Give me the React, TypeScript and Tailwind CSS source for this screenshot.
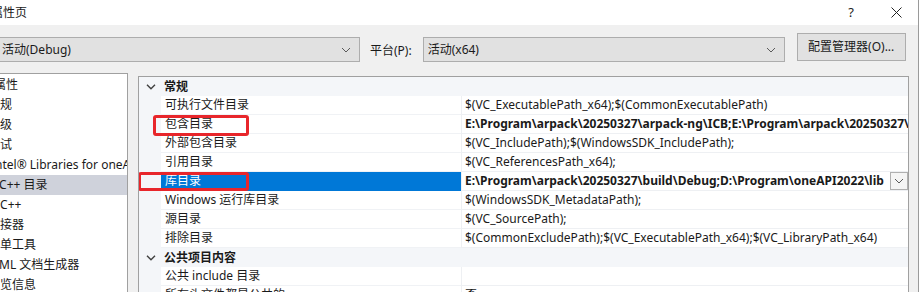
import React from "react";

const FONT = { fontFamily: '"Noto Sans", "Noto Sans CJK SC", sans-serif' };

function Chevron({ className = "" }: { className?: string }) {
  return (
    <svg width="10" height="6" viewBox="0 0 10 6" className={className}>
      <path d="M1 1 L5 5 L9 1" fill="none" stroke="#5a5a5a" strokeWidth="1" />
    </svg>
  );
}

function HeaderChevron() {
  return (
    <svg width="10" height="6" viewBox="0 0 10 6">
      <path d="M1 0.8 L5 4.8 L9 0.8" fill="none" stroke="#404040" strokeWidth="1.4" />
    </svg>
  );
}

type Row =
  | { kind: "cat"; name: string }
  | { kind: "prop"; name: string; value: string; bold?: boolean; selected?: boolean };

const rows: Row[] = [
  { kind: "cat", name: "常规" },
  { kind: "prop", name: "可执行文件目录", value: "$(VC_ExecutablePath_x64);$(CommonExecutablePath)" },
  { kind: "prop", name: "包含目录", value: "E:\\Program\\arpack\\20250327\\arpack-ng\\ICB;E:\\Program\\arpack\\20250327\\arpack-ng\\SRC", bold: true },
  { kind: "prop", name: "外部包含目录", value: "$(VC_IncludePath);$(WindowsSDK_IncludePath);" },
  { kind: "prop", name: "引用目录", value: "$(VC_ReferencesPath_x64);" },
  { kind: "prop", name: "库目录", value: "E:\\Program\\arpack\\20250327\\build\\Debug;D:\\Program\\oneAPI2022\\lib", bold: true, selected: true },
  { kind: "prop", name: "Windows 运行库目录", value: "$(WindowsSDK_MetadataPath);" },
  { kind: "prop", name: "源目录", value: "$(VC_SourcePath);" },
  { kind: "prop", name: "排除目录", value: "$(CommonExcludePath);$(VC_ExecutablePath_x64);$(VC_LibraryPath_x64)" },
  { kind: "cat", name: "公共项目内容" },
  { kind: "prop", name: "公共 include 目录", value: "" },
  { kind: "prop", name: "所有头文件都是公共的", value: "否" },
];

const tree: { text: string; ml: string; selected?: boolean }[] = [
  { text: "配置属性", ml: "ml-[-30px]" },
  { text: "常规", ml: "ml-[-12px]" },
  { text: "高级", ml: "ml-[-12px]" },
  { text: "调试", ml: "ml-[-12px]" },
  { text: "Intel® Libraries for oneAPI", ml: "ml-[-9px]" },
  { text: "VC++ 目录", ml: "ml-[-8px]", selected: true },
  { text: "C/C++", ml: "ml-[-12px]" },
  { text: "链接器", ml: "ml-[-12px]" },
  { text: "清单工具", ml: "ml-[-12px]" },
  { text: "XML 文档生成器", ml: "ml-[-8px]" },
  { text: "浏览信息", ml: "ml-[-12px]" },
];

export default function App() {
  return (
    <div style={FONT} className="w-[923px] h-[292px] overflow-hidden bg-white flex text-[12px] text-[#1a1a1a]">
      <div className="w-[919px] h-full border-r border-[#9a9a9a] flex flex-col">
        {/* Title bar */}
        <div className="h-[25px] bg-white flex items-center shrink-0">
          <span className="ml-[-9px] text-[12px] whitespace-nowrap">属性页</span>
          <div className="flex-1" />
          <span className="text-[13px] mr-[37px] text-[#222]">?</span>
          <svg width="11" height="11" viewBox="0 0 11 11" className="mr-[16px]">
            <path d="M0.5 0.5 L10.5 10.5 M10.5 0.5 L0.5 10.5" stroke="#222" strokeWidth="1" />
          </svg>
        </div>
        {/* Body */}
        <div className="flex-1 bg-[#f0f0f0] flex flex-col">
          <div className="flex items-start pt-[8px] h-[48px] shrink-0">
            <div className="mt-[4px] ml-[-3px] w-[363px] h-[25px] bg-[#e1e1e1] border border-[#adadad] flex items-center pl-[4px] pr-[8px]">
              <span className="flex-1 whitespace-nowrap">活动(Debug)</span>
              <Chevron />
            </div>
            <span className="mt-[9px] ml-[10px] whitespace-nowrap">平台(P):</span>
            <div className="mt-[4px] ml-[11px] w-[362px] h-[25px] bg-[#e1e1e1] border border-[#adadad] flex items-center pl-[4px] pr-[8px]">
              <span className="flex-1 whitespace-nowrap">活动(x64)</span>
              <Chevron />
            </div>
            <div className="ml-[12px] w-[109px] h-[28px] bg-[#e1e1e1] border border-[#adadad] flex items-center justify-center whitespace-nowrap">
              配置管理器(O)...
            </div>
          </div>
          <div className="flex flex-1 items-start">
            {/* Tree */}
            <div className="w-[128px] h-[230px] bg-white border-t border-r border-[#a0a0a0] overflow-hidden pt-[1px] shrink-0">
              {tree.map((t, i) => (
                <div
                  key={i}
                  className={`h-[20px] flex items-center whitespace-nowrap ${t.selected ? "bg-[#cfd2db]" : ""}`}
                >
                  <span className={t.ml}>{t.text}</span>
                </div>
              ))}
            </div>
            {/* Grid */}
            <div className="relative ml-[10px] mt-[3px] w-[771px] h-[230px] bg-white border-t border-l border-r border-[#a0a0a0] overflow-hidden">
              {rows.map((r, i) =>
                r.kind === "cat" ? (
                  <div key={i} className="h-[19px] bg-[#f4f6f9] flex items-center">
                    <div className="w-[22px] flex justify-center pl-[2px]">
                      <HeaderChevron />
                    </div>
                    <span className="font-bold pl-[3px]">{r.name}</span>
                  </div>
                ) : (
                  <div key={i} className="h-[19px] flex bg-[#f4f6f9]">
                    <div className="w-[22px] shrink-0" />
                    <div
                      className={`w-[300px] shrink-0 flex items-center pl-[4px] whitespace-nowrap border-b ${
                        r.selected ? "bg-[#0078d7] text-white border-[#0078d7]" : "bg-white border-[#f0f2f5]"
                      }`}
                    >
                      {r.name}
                    </div>
                    <div className="flex-1 min-w-0 bg-white border-l border-b border-[#eef0f3] flex items-center pl-[3px] overflow-hidden relative">
                      <span className={`whitespace-nowrap ${r.bold ? "font-bold" : ""}`}>{r.value}</span>
                      {r.selected && (
                        <div className="absolute right-0 top-0 w-[18px] h-[18px] bg-[#f5f5f5] border border-[#b0b0b0] flex items-center justify-center">
                          <Chevron />
                        </div>
                      )}
                    </div>
                  </div>
                )
              )}
              {/* Red annotation boxes */}
              <div className="absolute left-[14px] top-[38px] w-[96px] h-[21px] border-[3px] border-[#e8262b] rounded-[3px]" />
              <div className="absolute left-[-1px] top-[95px] w-[111px] h-[19px] border-[3px] border-[#e8262b] rounded-[3px]" />
            </div>
          </div>
        </div>
      </div>
    </div>
  );
}
